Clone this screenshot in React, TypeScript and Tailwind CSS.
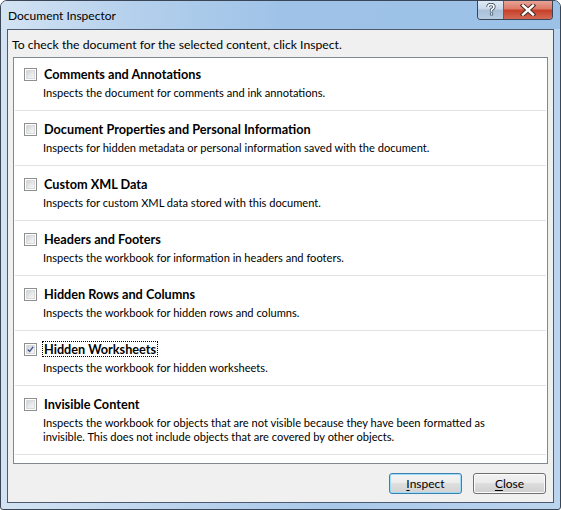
import React from "react";

type Item = { title: string; desc: React.ReactNode; checked?: boolean; focus?: boolean };

const items: Item[] = [
  { title: "Comments and Annotations", desc: "Inspects the document for comments and ink annotations." },
  { title: "Document Properties and Personal Information", desc: "Inspects for hidden metadata or personal information saved with the document." },
  { title: "Custom XML Data", desc: "Inspects for custom XML data stored with this document." },
  { title: "Headers and Footers", desc: "Inspects the workbook for information in headers and footers." },
  { title: "Hidden Rows and Columns", desc: "Inspects the workbook for hidden rows and columns." },
  { title: "Hidden Worksheets", desc: "Inspects the workbook for hidden worksheets.", checked: true, focus: true },
  {
    title: "Invisible Content",
    desc: (
      <>
        <span className="whitespace-nowrap">Inspects the workbook for objects that are not visible because they have been formatted as</span>
        <br />
        <span className="whitespace-nowrap">invisible. This does not include objects that are covered by other objects.</span>
      </>
    ),
  },
];

function CheckBox({ checked }: { checked?: boolean }) {
  return (
    <div className="w-[13px] h-[13px] border border-[#8e8f8f] bg-white p-[1px] shrink-0">
      <div className="w-full h-full bg-[linear-gradient(135deg,#cfd2d6_0%,#e6e7e9_50%,#f7f7f7_100%)] border border-[#d9dadc] flex items-center justify-center">
        {checked && (
          <svg width="9" height="9" viewBox="0 0 9 9">
            <path d="M1 4.5 L3.4 7 L8 1" fill="none" stroke="#4a5c92" strokeWidth="1.8" />
          </svg>
        )}
      </div>
    </div>
  );
}

function Row({ item, first }: { item: Item; first?: boolean }) {
  return (
    <div className={`${first ? "pt-[8px]" : "pt-[10px]"} pb-[10px] mx-[1px] border-b border-[#e2e2e2]`}>
      <div className="flex items-center h-[16px] pl-[9px]">
        <CheckBox checked={item.checked} />
        <span
          className={`ml-[5px] font-bold text-[12.7px] leading-[14px] text-black px-[1px] ${
            item.focus ? "border border-dotted border-black" : "border border-transparent"
          }`}
        >
          {item.title}
        </span>
      </div>
      <div className="mt-[4px] pl-[28px] text-[11.1px] leading-[14px] text-black">{item.desc}</div>
    </div>
  );
}

function Button({ label, u, def }: { label: string; u: string; def?: boolean }) {
  const rest = label.slice(1);
  return (
    <div
      className={`w-[73px] h-[21px] rounded-[3px] border flex items-center justify-center text-[12px] text-black ${
        def
          ? "border-[#3c7fb1] shadow-[inset_0_0_0_1px_#9fdcf7] bg-[linear-gradient(#f4f4f4_0%,#ececec_45%,#dfdfdf_50%,#d2d2d2_100%)]"
          : "border-[#707070] shadow-[inset_0_0_0_1px_#fbfbfb] bg-[linear-gradient(#f2f2f2_0%,#ebebeb_45%,#dddddd_50%,#cfcfcf_100%)]"
      }`}
    >
      <span>
        <span className="underline underline-offset-2">{u}</span>
        {rest}
      </span>
    </div>
  );
}

export default function App() {
  return (
    <div
      className="w-[561px] h-[510px] rounded-t-[7px] rounded-b-[3px] border border-[#3a4656] flex flex-col overflow-hidden bg-[linear-gradient(90deg,#d3e3f3_0%,#bcd4ed_30%,#a9c8ea_60%,#bcd5ee_100%)]"
      style={{ fontFamily: 'Lato, "Noto Sans", sans-serif' }}
    >
      <div className="h-[28px] shrink-0 flex items-start relative bg-[linear-gradient(90deg,#d3e3f3_0%,#b3cfec_25%,#9fc3e8_50%,#9cc1e7_100%)]">
        <div className="pl-[7px] pt-[7px] text-[12px] leading-[16px] text-black">Document Inspector</div>
        <div className="absolute top-[-1px] right-[7px] flex h-[20px] border border-t-0 border-[#3a4656] rounded-b-[4px] overflow-hidden">
          <div className="w-[26px] h-full flex items-center justify-center border-r border-[#53637a] bg-[linear-gradient(#e2ecf6_0%,#cad9ea_45%,#aac0d8_55%,#b8cde2_100%)]">
            <svg width="10" height="13" viewBox="0 0 10 13">
              <path d="M2 4 Q2 1.5 5 1.5 Q8 1.5 8 4 Q8 5.5 5.5 6.8 L5.5 8.5" fill="none" stroke="#3b4b5e" strokeWidth="3.2" />
              <rect x="3.9" y="9.6" width="3.2" height="2.8" fill="#3b4b5e" />
              <path d="M2 4 Q2 1.5 5 1.5 Q8 1.5 8 4 Q8 5.5 5.5 6.8 L5.5 8.5" fill="none" stroke="#ffffff" strokeWidth="1.6" />
              <rect x="4.7" y="10.2" width="1.6" height="1.6" fill="#ffffff" />
            </svg>
          </div>
          <div className="w-[48px] h-full flex items-center justify-center bg-[linear-gradient(#e9a99c_0%,#dc7b68_45%,#c9402a_55%,#d26a55_100%)]">
            <svg width="16" height="12" viewBox="0 0 16 12">
              <path d="M3 1.5 L13 10.5 M13 1.5 L3 10.5" stroke="#4a2a26" strokeWidth="4.4" strokeLinecap="square" />
              <path d="M3 1.5 L13 10.5 M13 1.5 L3 10.5" stroke="#ffffff" strokeWidth="2.4" strokeLinecap="square" />
            </svg>
          </div>
        </div>
      </div>
      <div className="mx-[6px] mb-[6px] flex-1 border border-[#4b5a6e] bg-[#f0f0f0] flex flex-col">
        <div className="pt-[7px] pl-[4px] text-[12.2px] leading-[16px] text-black">
          To check the document for the selected content, click Inspect.
        </div>
        <div className="mt-[4px] mx-[5px] h-[407px] border border-[#828790] bg-white">
          {items.map((it, i) => (
            <Row key={i} item={it} first={i === 0} />
          ))}
        </div>
        <div className="mt-[9px] pr-[7px] flex justify-end gap-[11px]">
          <Button label="Inspect" u="I" def />
          <Button label="Close" u="C" />
        </div>
      </div>
    </div>
  );
}
